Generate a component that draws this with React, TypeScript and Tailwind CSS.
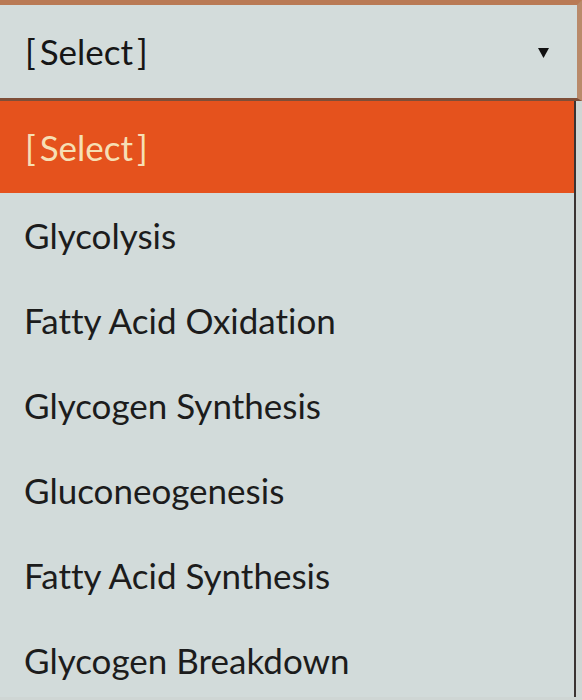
const options = [
  "Glycolysis",
  "Fatty Acid Oxidation",
  "Glycogen Synthesis",
  "Gluconeogenesis",
  "Fatty Acid Synthesis",
  "Glycogen Breakdown",
];

export default function App() {
  return (
    <div className="w-[582px] h-[700px] overflow-hidden bg-[#cfd6d4] font-['Lato',sans-serif] [font-variant-ligatures:none]">
      {/* closed select */}
      <div className="h-[101px] flex items-center justify-between pl-[25px] pr-[28px] bg-[#d3dcdb] border-t-[5px] border-r-[5px] border-t-[#b97a55] border-r-[#b98a6a] border-b-[3px] border-b-[#7e4e38] text-[#161616]">
        <span className="text-[35px] leading-none [word-spacing:-5px]">[ Select ]</span>
        <svg width="11" height="10" viewBox="0 0 11 10" className="mt-[2px]">
          <path d="M0 0 H11 L5.5 10 Z" fill="#111" />
        </svg>
      </div>

      {/* open list */}
      <div className="w-[576px] h-[596px] bg-[#d2dbda] border-r-[2px] border-[#3a3332]">
        <div className="h-[92px] flex items-center pl-[25px] bg-[#e5521d] text-[#f6dfb4] text-[35px] leading-none [word-spacing:-5px]">
          [ Select ]
        </div>
        {options.map((o) => (
          <div
            key={o}
            className="h-[85px] flex items-center pl-[24px] text-[35px] leading-none text-[#1c1c1c]"
          >
            {o}
          </div>
        ))}
      </div>
    </div>
  );
}
